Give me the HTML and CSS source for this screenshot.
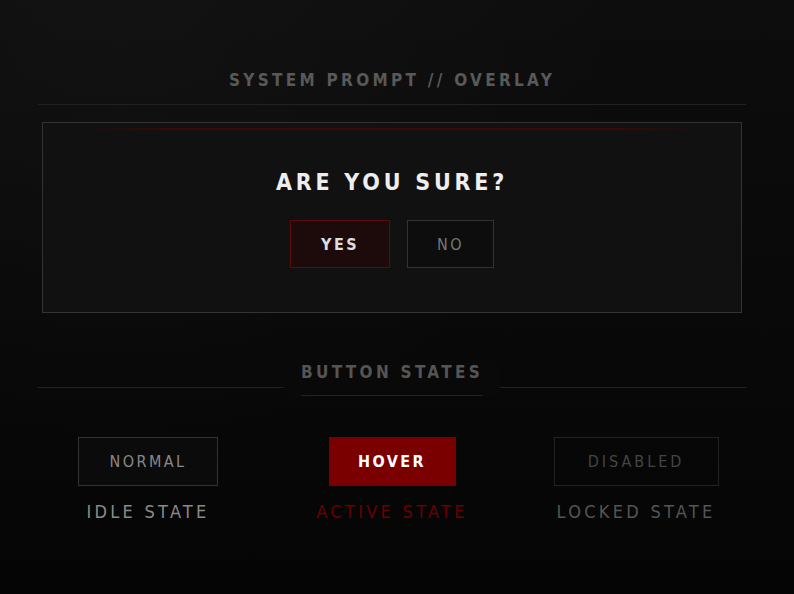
FILE: index.html
```html
<!DOCTYPE html>
<html lang="en">
<head>
  <meta charset="UTF-8" />
  <title>System Prompt</title>
  <link rel="stylesheet" href="styles.css">
</head>
<body>
  <div class="page">
    <h2 class="title">SYSTEM PROMPT // OVERLAY</h2>

    <!-- confirm overlay -->
    <div class="prompt">
      <div class="prompt-text">ARE YOU SURE?</div>
      <div class="prompt-actions">
        <button class="btn btn-yes">YES</button>
        <button class="btn btn-no">NO</button>
      </div>
    </div>

    <div class="divider">
      <div class="divider-line"></div>
      <h3 class="divider-title"><span>BUTTON STATES</span></h3>
      <div class="divider-line"></div>
    </div>

    <!-- state samples -->
    <div class="states">
      <div class="state">
        <button class="btn btn-normal">NORMAL</button>
        <div class="state-label">IDLE STATE</div>
      </div>
      <div class="state">
        <button class="btn btn-hover">HOVER</button>
        <div class="state-label active">ACTIVE STATE</div>
      </div>
      <div class="state">
        <button class="btn btn-disabled" disabled>DISABLED</button>
        <div class="state-label locked">LOCKED STATE</div>
      </div>
    </div>
  </div>
</body>
</html>
```

FILE: styles.css
```css
html, body {
  height: 100%;
}
body {
  margin: 0;
  background:
    radial-gradient(ellipse at 15% 5%, rgba(255,255,255,0.025), transparent 55%),
    linear-gradient(#0d0d0d, #050505);
  color: #ddd;
  font-family: "DejaVu Sans Condensed", "Liberation Sans Narrow", "DejaVu Sans", sans-serif;
}
.page {
  width: 708px;
  margin-left: 38px;
  padding-top: 68px;
}
.title {
  margin: 0;
  padding-bottom: 12px;
  border-bottom: 1px solid #222;
  text-align: center;
  font-size: 17px;
  line-height: 24px;
  font-weight: bold;
  letter-spacing: 3.3px;
  color: #595959;
}
.prompt {
  margin: 17px 4px 0;
  position: relative;
  background: #111;
  border: 1px solid #333;
  padding: 46px 0 44px;
  text-align: center;
}
.prompt::before {
  content: "";
  position: absolute;
  top: 5px;
  left: 40px;
  right: 40px;
  height: 2px;
  background: linear-gradient(90deg, transparent, #3e0808 15%, #3e0808 85%, transparent);
}
.prompt-text {
  font-size: 23px;
  line-height: 26px;
  font-weight: bold;
  letter-spacing: 3.8px;
  color: #eee;
}
.prompt-actions {
  display: flex;
  justify-content: center;
  gap: 17px;
  margin-top: 25px;
}
.btn {
  height: 49px;
  font-family: inherit;
  font-size: 16px;
  letter-spacing: 2.4px;
  background: transparent;
  border: 1px solid #333;
  color: #888;
  padding: 0 10px;
}
.btn-yes {
  width: 100px;
  height: 48px;
  background: #1d0b0b;
  border-color: #5c0a0a;
  color: #ddd;
  font-weight: bold;
}
.btn-no {
  width: 87px;
  height: 48px;
  background: #0d0d0d;
  color: #777;
}
.divider {
  display: flex;
  align-items: flex-start;
  margin-top: 49px;
}
.divider-line {
  flex: 1;
  height: 1px;
  background: #222;
  margin-top: 25px;
}
.divider-title {
  margin: 0;
  padding: 0 17px;
  background: #090909;
  font-size: 17px;
  line-height: 20px;
  font-weight: bold;
  letter-spacing: 3.3px;
  color: #555;
}
.divider-title span {
  display: block;
  padding-bottom: 13px;
  border-bottom: 1px solid #222;
}
.states {
  display: grid;
  grid-template-columns: repeat(3, 220px);
  gap: 24px;
  margin-top: 41px;
}
.state {
  display: flex;
  flex-direction: column;
  align-items: center;
}
.btn-normal {
  width: 140px;
  background: #0b0b0b;
}
.btn-hover {
  width: 127px;
  background: #7a0000;
  border-color: #7a0000;
  color: #fff;
  font-weight: bold;
}
.btn-disabled {
  width: 165px;
  border-color: #222;
  color: #444;
  letter-spacing: 3px;
}
.state-label {
  margin-top: 16px;
  font-size: 18px;
  line-height: 20px;
  letter-spacing: 3.3px;
  color: #8a8a8a;
}
.state-label.active {
  color: #6a0000;
}
.state-label.locked {
  color: #555;
}
```
